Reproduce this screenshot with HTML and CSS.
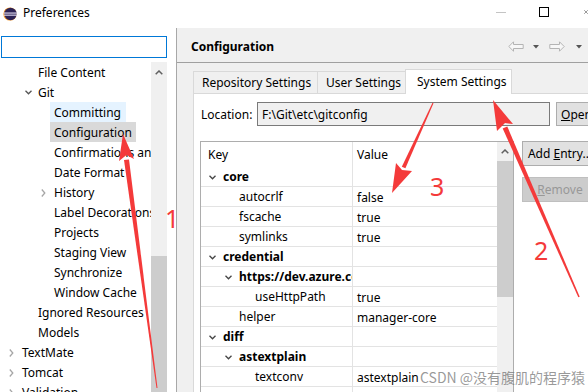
FILE: index.html
```html
<!DOCTYPE html>
<html>
<head>
<meta charset="utf-8">
<title>Preferences</title>
<link rel="stylesheet" href="styles.css">
</head>
<body>
<div class="window">
  <div class="titlebar">
    <svg class="app-icon" width="14" height="14" viewBox="0 0 14 14">
      <circle cx="7" cy="7" r="6.6" fill="#f7941e"/>
      <circle cx="7.5" cy="7" r="6.2" fill="#2c2255"/>
      <rect x="1" y="5.5" width="13" height="1.1" fill="#e6e0f5"/>
      <rect x="1" y="7.6" width="13" height="1.1" fill="#e6e0f5"/>
    </svg>
    <span class="title">Preferences</span>
    <div class="controls">
      <div class="ctl ctl-min"><span class="dash"></span></div>
      <div class="ctl ctl-max"><span class="square"></span></div>
      <div class="ctl ctl-close">
        <svg width="10" height="10" viewBox="0 0 10 10"><path d="M0.5 0.5L9.5 9.5M9.5 0.5L0.5 9.5" stroke="#000" stroke-width="1"/></svg>
      </div>
    </div>
  </div>

  <div class="main">
    <div class="left">
      <div class="search"></div>
      <div class="tree-wrap">
        <ul class="tree">
          <li class="lv1"><span class="tw"></span><span class="lbl">File Content</span></li>
          <li class="lv1"><span class="tw"><svg width="7" height="5" viewBox="0 0 7 5"><path d="M0.5 0.8L3.5 3.8L6.5 0.8" fill="none" stroke="#555" stroke-width="1.3"/></svg></span><span class="lbl">Git</span></li>
          <li class="lv2"><span class="tw"></span><span class="lbl hover">Committing</span></li>
          <li class="lv2"><span class="tw"></span><span class="lbl selected">Configuration</span></li>
          <li class="lv2"><span class="tw"></span><span class="lbl">Confirmations and Warnings</span></li>
          <li class="lv2"><span class="tw"></span><span class="lbl">Date Format</span></li>
          <li class="lv2"><span class="tw"><svg width="5" height="8" viewBox="0 0 5 8"><path d="M0.8 0.5L3.8 4L0.8 7.5" fill="none" stroke="#a6a6a6" stroke-width="1.3"/></svg></span><span class="lbl">History</span></li>
          <li class="lv2"><span class="tw"></span><span class="lbl">Label Decorations</span></li>
          <li class="lv2"><span class="tw"></span><span class="lbl">Projects</span></li>
          <li class="lv2"><span class="tw"></span><span class="lbl">Staging View</span></li>
          <li class="lv2"><span class="tw"></span><span class="lbl">Synchronize</span></li>
          <li class="lv2"><span class="tw"></span><span class="lbl">Window Cache</span></li>
          <li class="lv1"><span class="tw"></span><span class="lbl">Ignored Resources</span></li>
          <li class="lv1"><span class="tw"></span><span class="lbl">Models</span></li>
          <li class="lv0"><span class="tw"><svg width="5" height="8" viewBox="0 0 5 8"><path d="M0.8 0.5L3.8 4L0.8 7.5" fill="none" stroke="#a6a6a6" stroke-width="1.3"/></svg></span><span class="lbl">TextMate</span></li>
          <li class="lv0"><span class="tw"><svg width="5" height="8" viewBox="0 0 5 8"><path d="M0.8 0.5L3.8 4L0.8 7.5" fill="none" stroke="#a6a6a6" stroke-width="1.3"/></svg></span><span class="lbl">Tomcat</span></li>
          <li class="lv0"><span class="tw"><svg width="5" height="8" viewBox="0 0 5 8"><path d="M0.8 0.5L3.8 4L0.8 7.5" fill="none" stroke="#a6a6a6" stroke-width="1.3"/></svg></span><span class="lbl">Validation</span></li>
        </ul>
        <div class="vscroll tree-sb">
          <div class="sb-up"><svg width="8" height="5" viewBox="0 0 8 5"><path d="M0.7 4.3L4 1L7.3 4.3" fill="none" stroke="#606060" stroke-width="1.5"/></svg></div>
          <div class="sb-gap"></div>
          <div class="sb-thumb"></div>
        </div>
      </div>
    </div>

    <div class="right">
      <div class="page-header">
        <h1 class="page-title">Configuration</h1>
        <div class="nav">
          <svg width="16" height="11" viewBox="0 0 16 11"><path d="M0.8 5.5L5.5 0.8V3.5H15.2V7.5H5.5V10.2Z" fill="#f7f7f7" stroke="#b4b4b4" stroke-width="1"/></svg>
          <svg class="tri" width="6" height="4" viewBox="0 0 6 4"><path d="M0 0H6L3 3.5Z" fill="#555"/></svg>
          <svg width="16" height="11" viewBox="0 0 16 11"><path d="M15.2 5.5L10.5 0.8V3.5H0.8V7.5H10.5V10.2Z" fill="#f7f7f7" stroke="#b4b4b4" stroke-width="1"/></svg>
          <svg class="tri" width="6" height="4" viewBox="0 0 6 4"><path d="M0 0H6L3 3.5Z" fill="#555"/></svg>
        </div>
      </div>

      <div class="tabs">
        <div class="tab tab-repo">Repository Settings</div>
        <div class="tab tab-user">User Settings</div>
        <div class="tab tab-sys active">System Settings</div>
      </div>

      <div class="tabpanel">
        <div class="loc-row">
          <span class="loc-label">Location:</span>
          <div class="loc-field">F:\Git\etc\gitconfig</div>
          <div class="btn btn-open"><u>O</u>pen...</div>
        </div>

        <div class="cfg-row">
          <div class="cfg-table">
            <div class="cfg-body">
              <div class="cfg-head"><div class="c-key">Key</div><div class="c-val">Value</div></div>
              <div class="cfg-tr grp"><div class="c-key lv0"><span class="tw"><svg width="7" height="5" viewBox="0 0 7 5"><path d="M0.5 0.8L3.5 3.8L6.5 0.8" fill="none" stroke="#444" stroke-width="1.3"/></svg></span><span>core</span></div><div class="c-val"></div></div>
              <div class="cfg-tr"><div class="c-key lv1"><span class="tw"></span><span>autocrlf</span></div><div class="c-val">false</div></div>
              <div class="cfg-tr"><div class="c-key lv1"><span class="tw"></span><span>fscache</span></div><div class="c-val">true</div></div>
              <div class="cfg-tr"><div class="c-key lv1"><span class="tw"></span><span>symlinks</span></div><div class="c-val">true</div></div>
              <div class="cfg-tr grp"><div class="c-key lv0"><span class="tw"><svg width="7" height="5" viewBox="0 0 7 5"><path d="M0.5 0.8L3.5 3.8L6.5 0.8" fill="none" stroke="#444" stroke-width="1.3"/></svg></span><span>credential</span></div><div class="c-val"></div></div>
              <div class="cfg-tr grp"><div class="c-key lv1"><span class="tw"><svg width="7" height="5" viewBox="0 0 7 5"><path d="M0.5 0.8L3.5 3.8L6.5 0.8" fill="none" stroke="#444" stroke-width="1.3"/></svg></span><span>https://dev.azure.com</span></div><div class="c-val"></div></div>
              <div class="cfg-tr"><div class="c-key lv2"><span class="tw"></span><span>useHttpPath</span></div><div class="c-val">true</div></div>
              <div class="cfg-tr"><div class="c-key lv1"><span class="tw"></span><span>helper</span></div><div class="c-val">manager-core</div></div>
              <div class="cfg-tr grp"><div class="c-key lv0"><span class="tw"><svg width="7" height="5" viewBox="0 0 7 5"><path d="M0.5 0.8L3.5 3.8L6.5 0.8" fill="none" stroke="#444" stroke-width="1.3"/></svg></span><span>diff</span></div><div class="c-val"></div></div>
              <div class="cfg-tr grp"><div class="c-key lv1"><span class="tw"><svg width="7" height="5" viewBox="0 0 7 5"><path d="M0.5 0.8L3.5 3.8L6.5 0.8" fill="none" stroke="#444" stroke-width="1.3"/></svg></span><span>astextplain</span></div><div class="c-val"></div></div>
              <div class="cfg-tr"><div class="c-key lv2"><span class="tw"></span><span>textconv</span></div><div class="c-val">astextplain</div></div>
              <div class="cfg-tr"><div class="c-key lv0"><span class="tw"></span><span></span></div><div class="c-val"></div></div>
            </div>
            <div class="vscroll table-sb">
              <div class="sb-up"><svg width="8" height="5" viewBox="0 0 8 5"><path d="M0.7 4.3L4 1L7.3 4.3" fill="none" stroke="#606060" stroke-width="1.5"/></svg></div>
              <div class="sb-thumb"></div>
            </div>
          </div>
          <div class="cfg-buttons">
            <div class="btn btn-add">Add <u>E</u>ntry...</div>
            <div class="btn btn-remove"><u>R</u>emove</div>
          </div>
        </div>
      </div>
    </div>
  </div>

  <svg class="annot" width="588" height="392" viewBox="0 0 588 392">
    <g fill="#f43a3a">
      <polygon points="156.5,388.1 157.5,387.9 129,159.5 124,160.1"/>
      <polygon points="123,134 134,159 126.5,155 119,161"/>
      <polygon points="578.3,297.3 579.7,296.7 507.3,126.5 502.7,128.5"/>
      <polygon points="493,100 513,124 505,123 497,131"/>
      <polygon points="432.5,102.8 433.5,103.2 405.4,168.3 401.8,166.7"/>
      <polygon points="392,193 396,163 402,170 412,171"/>
    </g>
    <g class="annot-num" fill="#f43a3a">
      <text x="165" y="228">1</text>
      <text x="534" y="260">2</text>
      <text x="430" y="196">3</text>
    </g>
  </svg>
  <div class="watermark">CSDN @没有腹肌的程序猿</div>
</div>
</body>
</html>
```

FILE: styles.css
```css
* { box-sizing: border-box; }
html, body { margin: 0; padding: 0; }
body {
  font-family: "Noto Sans", "Open Sans", "Noto Sans CJK SC", sans-serif;
  font-size: 12px;
  color: #000;
  background: #fff;
}
.window {
  position: relative;
  width: 588px;
  height: 392px;
  overflow: hidden;
  background: #fff;
}

/* title bar */
.titlebar {
  height: 28px;
  display: flex;
  align-items: center;
  background: #fff;
}
.app-icon { margin-left: 3px; margin-top: -1px; flex: none; }
.title { margin-left: 6px; font-size: 12px; flex: 1; margin-top: -3px; }
.controls { display: flex; width: 112px; height: 28px; flex: none; overflow: hidden; }
.ctl { height: 28px; display: flex; align-items: center; flex: none; }
.ctl-min { width: 46px; justify-content: center; padding-left: 4px; }
.ctl-max { width: 44px; justify-content: center; }
.ctl-close { width: 22px; padding-left: 18px; align-items: flex-start; padding-top: 7px; }
.dash { width: 10px; height: 1px; background: #c4c4c4; margin-top: -4px; }
.square { width: 10px; height: 10px; border: 1px solid #000; margin-top: -4px; }

/* main */
.main { display: flex; height: 364px; }
.left {
  width: 177px;
  flex: none;
  background: #fff;
  border-right: 1px solid #a8a8a8;
}
.search {
  margin: 8px 0 0 1px;
  width: 166px;
  height: 22px;
  border: 1px solid #0078d7;
  background: #fff;
}
.tree-wrap { margin-top: 4px; display: flex; height: 330px; }
.tree {
  list-style: none;
  margin: 0;
  padding: 0;
  width: 151px;
  flex: none;
  overflow: hidden;
}
.tree li {
  height: 20px;
  display: flex;
  align-items: center;
  white-space: nowrap;
}
.tree .lv0 { padding-left: 5px; }
.tree .lv1 { padding-left: 21px; }
.tree .lv2 { padding-left: 37px; }
.tree .tw {
  width: 13px;
  flex: none;
  padding-left: 4px;
  padding-top: 1px;
  display: flex;
  align-items: center;
  height: 20px;
}
.tree .lbl { padding: 1px 4px 0 4px; height: 20px; line-height: 19px; flex: none; }
.tree .lbl.hover { background: #e5f3ff; padding-right: 5px; }
.tree .lbl.selected { background: #d9d9d9; }

.vscroll {
  width: 16px;
  flex: none;
  background: #f0f0f0;
  display: flex;
  flex-direction: column;
  overflow: hidden;
}
.sb-up { height: 20px; flex: none; display: flex; align-items: center; justify-content: center; }
.tree-sb .sb-gap { height: 174px; flex: none; }
.sb-thumb { width: 16px; background: #cdcdcd; flex: none; }
.tree-sb .sb-thumb { height: 200px; }

/* right */
.right {
  flex: 1;
  background: #f0f0f0;
  overflow: hidden;
  min-width: 0;
}
.page-header {
  height: 35px;
  border-bottom: 1px solid #a0a0a0;
  display: flex;
  align-items: center;
  padding-left: 14px;
  padding-right: 6px;
  padding-top: 2px;
}
.page-title { margin: 0; font-size: 12px; font-weight: bold; flex: 1; margin-top: 1px; }
.nav { display: flex; align-items: center; }
.nav .tri { margin: 1px 10px 0 9px; }
.nav .tri:last-child { margin: 1px 0 0 11px; }

.tabs {
  display: flex;
  align-items: flex-end;
  height: 24px;
  margin: 6px 0 0 16px;
  position: relative;
  z-index: 1;
}
.tab {
  height: 22px;
  line-height: 22px;
  border: 1px solid #d9d9d9;
  border-bottom: none;
  background: #f0f0f0;
  white-space: nowrap;
  padding-left: 8px;
  flex: none;
}
.tab-repo { width: 125px; }
.tab-user { width: 89px; margin-left: -1px; }
.tab-sys {
  width: 107px;
  height: 25px;
  margin-left: -1px;
  margin-bottom: -1px;
  background: #fff;
  padding-left: 11px;
  line-height: 24px;
}

.tabpanel {
  margin-left: 16px;
  border-left: 1px solid #d9d9d9;
  border-top: 1px solid #d9d9d9;
  background: #fff;
  height: 300px;
  padding: 8px 0 0 6px;
}
.loc-row { display: flex; align-items: center; height: 24px; }
.loc-label { width: 57px; flex: none; padding-left: 1px; padding-top: 1px; }
.loc-field {
  width: 293px;
  height: 24px;
  flex: none;
  border: 1px solid #7a7a7a;
  background: #f0f0f0;
  line-height: 23px;
  padding-left: 4px;
}
.btn {
  flex: none;
  height: 24px;
  background: #e1e1e1;
  border: 1px solid #adadad;
  white-space: nowrap;
  line-height: 23px;
}
.btn-open { margin-left: 6px; width: 80px; padding-left: 4px; }

.cfg-row { display: flex; margin-top: 15px; }
.cfg-table {
  width: 314px;
  height: 260px;
  flex: none;
  border: 1px solid #adadad;
  border-bottom: none;
  display: flex;
}
.cfg-body { width: 296px; flex: none; overflow: hidden; }
.cfg-head { display: flex; height: 25px; line-height: 25px; }
.cfg-head .c-key { padding-left: 7px; }
.cfg-tr {
  display: flex;
  height: 20px;
  line-height: 21px;
  border-bottom: 1px solid #e3e3e3;
}
.c-key {
  width: 152px;
  flex: none;
  border-right: 1px solid #e3e3e3;
  overflow: hidden;
  white-space: nowrap;
  display: flex;
  align-items: center;
}
.c-val { flex: 1; padding-left: 4px; white-space: nowrap; overflow: hidden; }
.cfg-tr .c-key.lv0 { padding-left: 8px; }
.cfg-tr .c-key.lv1 { padding-left: 24px; }
.cfg-tr .c-key.lv2 { padding-left: 40px; }
.cfg-tr .tw { width: 14px; flex: none; display: flex; align-items: center; height: 19px; padding-top: 1px; }
.cfg-tr.grp .c-key { font-weight: bold; }
.table-sb .sb-up { height: 19px; }
.table-sb .sb-thumb { height: 136px; }

.cfg-buttons { margin-left: 8px; display: flex; flex-direction: column; }
.btn-add { width: 76px; height: 25px; text-align: center; line-height: 24px; }
.btn-remove {
  width: 76px;
  height: 25px;
  margin-top: 11px;
  text-align: center;
  line-height: 24px;
  background: #cccccc;
  border-color: #bfbfbf;
  color: #989898;
}

/* overlays */
.annot { position: absolute; left: 0; top: 0; pointer-events: none; }
.annot-num text { font-family: "Noto Sans", sans-serif; font-size: 25px; }
.watermark {
  position: absolute;
  left: 420px;
  top: 367px;
  font-family: "Noto Sans CJK SC", "Noto Sans", sans-serif;
  font-size: 14px;
  line-height: 20px;
  color: rgba(120, 120, 120, 0.75);
  white-space: nowrap;
}
```
